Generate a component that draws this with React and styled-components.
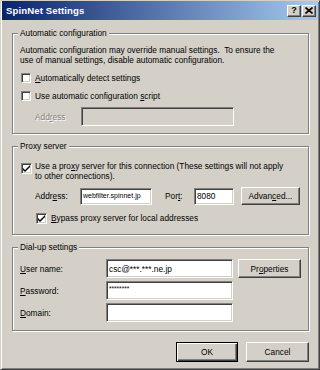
import React from "react";
import styled, { createGlobalStyle } from "styled-components";

const GlobalStyle = createGlobalStyle`
  html, body {
    margin: 0;
    padding: 0;
    background: #d4d0c8;
  }
  * {
    box-sizing: border-box;
  }
`;

const Window = styled.div`
  width: 320px;
  height: 370px;
  background: #d4d0c8;
  border: 1px solid;
  border-color: #d4d0c8 #404040 #404040 #d4d0c8;
  box-shadow: inset 1px 1px #fff, inset -1px -1px #808080;
  padding: 0 2px 2px 2px;
  font-family: "Liberation Sans", Arial, sans-serif;
  font-size: 8.3px;
  line-height: 10px;
  color: #000;
  display: flex;
  flex-direction: column;
  overflow: hidden;
`;

const TitleBar = styled.div`
  height: 19px;
  margin: 0 -1px;
  background: linear-gradient(to right, #0a246a, #a6caf0);
  display: flex;
  align-items: center;
  padding: 0 2px 0 4px;
`;

const Title = styled.div`
  flex: 1;
  color: #fff;
  font-weight: bold;
  font-size: 9.6px;
  letter-spacing: 0.1px;
`;

const TitleButton = styled.div`
  width: 14px;
  height: 12px;
  margin-left: ${(p) => (p.$gap ? "1px" : "0")};
  background: #d4d0c8;
  border: 1px solid;
  border-color: #fff #404040 #404040 #fff;
  box-shadow: inset -1px -1px #808080;
  display: flex;
  align-items: center;
  justify-content: center;
  font-weight: bold;
  font-size: 9px;
  line-height: 9px;
`;

const Content = styled.div`
  padding: 13px 8px 0 9px;
  display: flex;
  flex-direction: column;
`;

const Group = styled.section`
  position: relative;
  height: ${(p) => p.$h}px;
  margin-bottom: 12px;
  border: 1px solid #808080;
  box-shadow: inset 1px 1px #fff, 1px 1px #fff;
  padding: ${(p) => p.$pt}px 7px 0 7px;
  display: flex;
  flex-direction: column;
`;

const Caption = styled.div`
  position: absolute;
  top: -6px;
  left: 5px;
  padding: 0 2px;
  background: #d4d0c8;
  line-height: 11px;
`;

const Text = styled.div`
  line-height: 10px;
  white-space: nowrap;
`;

const CheckRow = styled.div`
  display: flex;
  align-items: ${(p) => (p.$top ? "flex-start" : "center")};
  height: ${(p) => (p.$h ? `${p.$h}px` : "auto")};
  margin-top: ${(p) => p.$mt || 0}px;
  margin-left: ${(p) => p.$ml || 1}px;
  gap: ${(p) => p.$gap || 4}px;
  white-space: nowrap;
`;

const Box = styled.span`
  flex: none;
  width: ${(p) => p.$size || 11}px;
  height: ${(p) => p.$size || 11}px;
  margin-top: ${(p) => p.$mt || 0}px;
  background: #fff;
  border: 1px solid;
  border-color: #808080 #fff #fff #808080;
  box-shadow: inset 1px 1px #404040, inset -1px -1px #d4d0c8;
  display: flex;
  align-items: center;
  justify-content: center;
`;

const Row = styled.div`
  display: flex;
  align-items: center;
  height: ${(p) => p.$h || 19}px;
  margin-top: ${(p) => p.$mt || 0}px;
  margin-left: ${(p) => p.$ml || 0}px;
  white-space: nowrap;
`;

const Label = styled.span`
  width: ${(p) => (p.$w ? `${p.$w}px` : "auto")};
  flex: none;
  color: ${(p) => (p.$disabled ? "#808080" : "#000")};
  text-shadow: ${(p) => (p.$disabled ? "1px 1px #fff" : "none")};
`;

const Field = styled.div`
  flex: none;
  width: ${(p) => p.$w}px;
  height: ${(p) => p.$h || 19}px;
  margin-left: ${(p) => p.$ml || 0}px;
  background: ${(p) => (p.$disabled ? "#d4d0c8" : "#fff")};
  border: 1px solid;
  border-color: #808080 #fff #fff #808080;
  box-shadow: inset 1px 1px #404040, inset -1px -1px #d4d0c8;
  padding: ${(p) => (p.$small ? "2px 2px 0" : "0 2px")};
  display: flex;
  align-items: ${(p) => (p.$top ? "flex-start" : "center")};
  font-size: ${(p) => p.$fs || 8.3}px;
  overflow: hidden;
`;

const Button = styled.div`
  flex: none;
  width: ${(p) => p.$w}px;
  height: ${(p) => p.$h || 19}px;
  margin-left: ${(p) => p.$ml || 0}px;
  background: #d4d0c8;
  border: 1px solid;
  border-color: ${(p) =>
    p.$default ? "#000" : "#fff #404040 #404040 #fff"};
  box-shadow: ${(p) =>
    p.$default
      ? "inset 1px 1px #fff, inset -1px -1px #404040, inset -2px -2px #808080"
      : "inset -1px -1px #808080"};
  display: flex;
  align-items: center;
  justify-content: center;
`;

const Buttons = styled.div`
  display: flex;
  justify-content: flex-end;
  gap: 8px;
  margin-top: -1px;
  padding-right: 0;
`;

const U = styled.span`
  text-decoration: underline;
`;

const Check = () => (
  <svg width="7" height="7" viewBox="0 0 7 7">
    <path d="M0 3 L2 5 L7 0 L7 2 L2 7 L0 5 Z" fill="#000" />
  </svg>
);

const CloseGlyph = () => (
  <svg width="8" height="7" viewBox="0 0 8 7">
    <path d="M0.5 0.5 L7.5 6.5 M7.5 0.5 L0.5 6.5" stroke="#000" strokeWidth="1.6" />
  </svg>
);

export default function App() {
  return (
    <>
      <GlobalStyle />
      <Window>
        <TitleBar>
          <Title>SpinNet Settings</Title>
          <TitleButton>?</TitleButton>
          <TitleButton $gap>
            <CloseGlyph />
          </TitleButton>
        </TitleBar>
        <Content>
          <Group $h={101} $pt={11}>
            <Caption>Automatic configuration</Caption>
            <Text>
              Automatic configuration may override manual settings.&nbsp; To ensure the
              <br />
              use of manual settings, disable automatic configuration.
            </Text>
            <CheckRow $h={12} $mt={7}>
              <Box $size={10} />
              <span>
                <U>A</U>utomatically detect settings
              </span>
            </CheckRow>
            <CheckRow $h={12} $mt={6}>
              <Box $size={10} />
              <span>
                Use automatic configuration <U>s</U>cript
              </span>
            </CheckRow>
            <Row $mt={5} $ml={15}>
              <Label $w={46} $disabled>
                Add<U>r</U>ess
              </Label>
              <Field $w={153} $disabled />
            </Row>
          </Group>

          <Group $h={89} $pt={14}>
            <Caption>Proxy server</Caption>
            <CheckRow $top $gap={3}>
              <Box $mt={2}>
                <Check />
              </Box>
              <Text>
                Use a pro<U>x</U>y server for this connection (These settings will not apply
                <br />
                to other connections).
              </Text>
            </CheckRow>
            <Row $h={18} $mt={6} $ml={15}>
              <Label $w={45}>
                Addr<U>e</U>ss:
              </Label>
              <Field $w={72} $h={17} $fs={7}>
                webfilter.spinnet.jp
              </Field>
              <Label $w={29} style={{ marginLeft: 13 }}>
                Por<U>t</U>:
              </Label>
              <Field $w={40} $h={17}>
                8080
              </Field>
              <Button $w={59} $h={18} $ml={7}>
                Advan<U>c</U>ed...
              </Button>
            </Row>
            <CheckRow $h={12} $mt={7} $ml={16} $gap={4}>
              <Box $size={11}>
                <Check />
              </Box>
              <span>
                <U>B</U>ypass proxy server for local addresses
              </span>
            </CheckRow>
          </Group>

          <Group $h={84} $pt={11}>
            <Caption>Dial-up settings</Caption>
            <Row>
              <Label $w={86}>
                <U>U</U>ser name:
              </Label>
              <Field $w={127}>csc@***.***.ne.jp</Field>
              <Button $w={63} $ml={5}>
                Pr<U>o</U>perties
              </Button>
            </Row>
            <Row $mt={3}>
              <Label $w={86}>
                <U>P</U>assword:
              </Label>
              <Field $w={127} $top $small $fs={6.5}>
                ********
              </Field>
            </Row>
            <Row $mt={3}>
              <Label $w={86}>
                <U>D</U>omain:
              </Label>
              <Field $w={127} />
            </Row>
          </Group>

          <Buttons>
            <Button $w={62} $h={20} $default>
              OK
            </Button>
            <Button $w={63} $h={20}>
              Cancel
            </Button>
          </Buttons>
        </Content>
      </Window>
    </>
  );
}
